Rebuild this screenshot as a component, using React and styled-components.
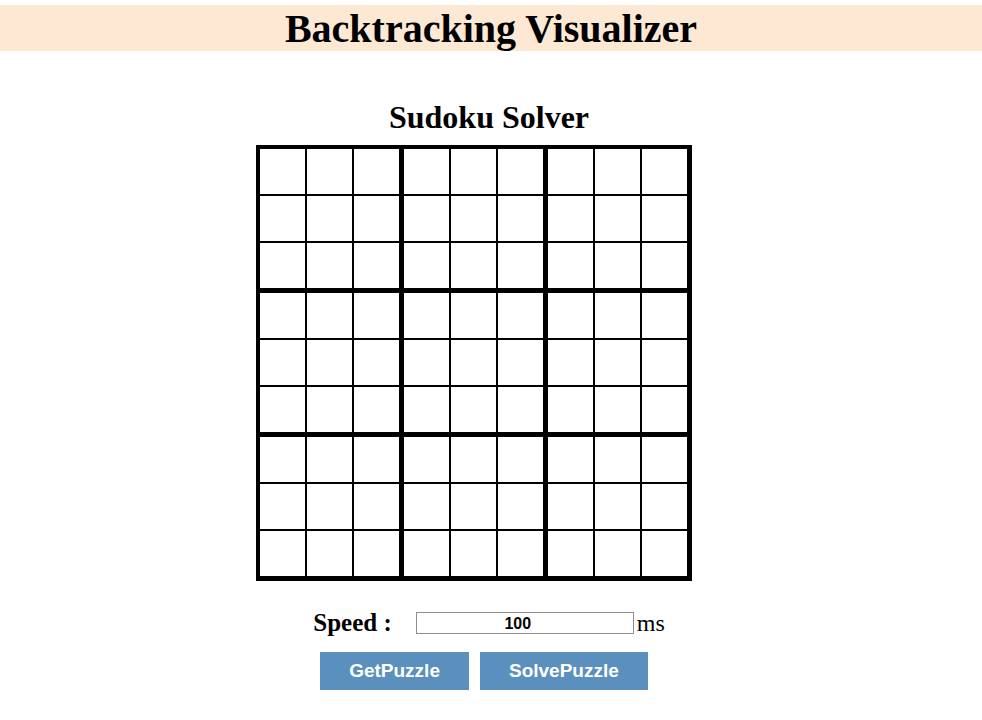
import React, { Component } from 'react';
import styled, { createGlobalStyle } from 'styled-components';

const GlobalStyle = createGlobalStyle`
    body {
        margin: 0;
        background: #ffffff;
        font-family: "Liberation Serif", "Times New Roman", serif;
        color: #000000;
    }
`;

const Header = styled.h1`
    margin: 5px 0 0;
    height: 46px;
    line-height: 47px;
    background: #fce8d3;
    text-align: center;
    font-size: 40px;
    font-weight: bold;
`;

const Title = styled.h2`
    margin: 48px 4px 0 0;
    line-height: 37px;
    text-align: center;
    font-size: 32px;
    font-weight: bold;
`;

const Board = styled.div`
    display: grid;
    grid-template-columns: repeat(9, auto);
    width: fit-content;
    margin: 9px 0 0 calc(50% - 235px);
    border-style: solid;
    border-color: #000000;
    border-width: 4px 5px 5px 4px;
`;

const Cell = styled.div`
    width: 45px;
    height: 45px;
    background: #ffffff;
    border-right: ${p => p.$right}px solid #000000;
    border-bottom: ${p => p.$bottom}px solid #000000;
`;

const SpeedRow = styled.div`
    display: flex;
    align-items: center;
    justify-content: center;
    height: 28px;
    margin: 28px 4px 0 0;
`;

const SpeedLabel = styled.label`
    font-size: 25px;
    font-weight: bold;
    margin-right: 24px;
`;

const SpeedInput = styled.input`
    box-sizing: border-box;
    width: 218px;
    height: 22px;
    padding: 1px 14px 0 0;
    border: 1px solid #8e8e8e;
    background: #ffffff;
    font-family: "Liberation Sans", Arial, sans-serif;
    font-size: 16px;
    font-weight: bold;
    text-align: center;
    color: #000000;
`;

const Unit = styled.span`
    font-size: 24px;
    margin-left: 3px;
`;

const ButtonRow = styled.div`
    display: flex;
    justify-content: center;
    gap: 11px;
    margin: 15px 14px 0 0;
`;

const Button = styled.button`
    height: 38px;
    padding: 0 29px;
    border: none;
    background: #5a8fbe;
    color: #ffffff;
    font-family: "Liberation Sans", Arial, sans-serif;
    font-size: 19px;
    font-weight: bold;
    cursor: pointer;
`;

const lineWidth = (i) => {
    if (i === 8) return 0;
    return i % 3 === 2 ? 5 : 2;
};

class App extends Component
{
    state = {
        speed: 100,
        board: Array.from({ length: 81 }, () => '')
    }

    render()
    {
        const { speed, board } = this.state;

        return (
            <>
                <GlobalStyle />
                <Header>Backtracking Visualizer</Header>
                <Title>Sudoku Solver</Title>
                <Board>
                    {board.map((value, idx) => (
                        <Cell
                            key={idx}
                            $right={lineWidth(idx % 9)}
                            $bottom={lineWidth(Math.floor(idx / 9))}
                        >
                            {value}
                        </Cell>
                    ))}
                </Board>
                <SpeedRow>
                    <SpeedLabel>Speed :</SpeedLabel>
                    <SpeedInput
                        value={speed}
                        onChange={e => this.setState({ speed: e.target.value })}
                    />
                    <Unit>ms</Unit>
                </SpeedRow>
                <ButtonRow>
                    <Button>GetPuzzle</Button>
                    <Button>SolvePuzzle</Button>
                </ButtonRow>
            </>
        );
    }
}

export default App;
